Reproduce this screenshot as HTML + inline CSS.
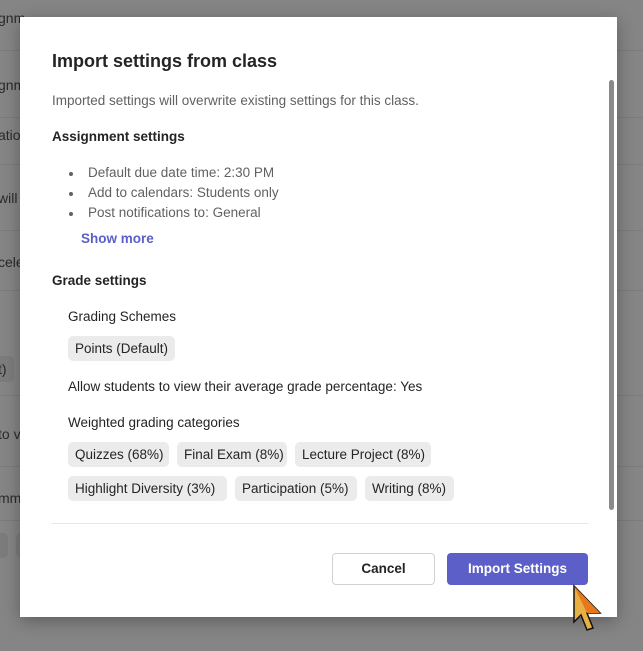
<!DOCTYPE html>
<html><head><style>
*{margin:0;padding:0;box-sizing:border-box}
body{width:643px;height:651px;overflow:hidden;background:#858585;font-family:"Liberation Sans",sans-serif;position:relative;color:#242424}
.bg{position:absolute;left:0;font-size:14px;color:#2a2a2a}
.row{position:absolute;left:0;width:643px;height:1px;background:#7b7b7b}
.dlg{position:absolute;left:20px;top:17px;width:597px;height:600px;background:#fff;box-shadow:0 4px 16px rgba(0,0,0,.3)}
.a{position:absolute;white-space:nowrap}
.chip{position:absolute;height:25px;background:#ebebeb;border-radius:5px;font-size:13.5px;line-height:25px;padding:0 7px;color:#242424;white-space:nowrap}
.li{font-size:13.5px;color:#616161}
.dot{position:absolute;width:4px;height:4px;border-radius:50%;background:#616161}
</style></head><body>
<div class="row" style="top:50px"></div><div class="row" style="top:117px"></div><div class="row" style="top:164px"></div><div class="row" style="top:230px"></div><div class="row" style="top:290px"></div><div class="row" style="top:395px"></div><div class="row" style="top:466px"></div><div class="row" style="top:520px"></div>
<div class="bg" style="top:10px;left:-2px">gnm</div>
<div class="bg" style="top:77px;left:-2px">gnm</div>
<div class="bg" style="top:127px;left:-2px">atio</div>
<div class="bg" style="top:190px;left:-2px">will</div>
<div class="bg" style="top:254px;left:-2px">cele</div>
<div style="position:absolute;left:-10px;top:356px;width:24px;height:26px;background:#7c7c7c;border-radius:5px"></div>
<div class="bg" style="top:361px;left:-2px">t)</div>
<div class="bg" style="top:426px;left:-2px">to v</div>
<div class="bg" style="top:490px;left:-2px">mme</div>
<div style="position:absolute;left:-10px;top:533px;width:18px;height:25px;background:#7c7c7c;border-radius:5px"></div>
<div style="position:absolute;left:16px;top:533px;width:10px;height:25px;background:#7c7c7c;border-radius:5px"></div>
<div class="dlg">
<div class="a" style="left:32px;top:34px;font-size:18px;font-weight:bold;color:#242424">Import settings from class</div>
<div class="a li" style="left:32px;top:76px">Imported settings will overwrite existing settings for this class.</div>
<div class="a" style="left:32px;top:112px;font-size:13.5px;font-weight:bold">Assignment settings</div>
<div class="dot" style="left:49px;top:155px"></div><div class="a li" style="left:68px;top:148px">Default due date time: 2:30 PM</div>
<div class="dot" style="left:49px;top:175px"></div><div class="a li" style="left:68px;top:168px">Add to calendars: Students only</div>
<div class="dot" style="left:49px;top:195px"></div><div class="a li" style="left:68px;top:188px">Post notifications to: General</div>
<div class="a" style="left:61px;top:214px;font-size:13.5px;font-weight:bold;color:#5b5fc7">Show more</div>
<div class="a" style="left:32px;top:256px;font-size:13.5px;font-weight:bold">Grade settings</div>
<div class="a" style="left:48px;top:292px;font-size:13.5px">Grading Schemes</div>
<div class="chip" style="left:48px;top:319px">Points (Default)</div>
<div class="a" style="left:48px;top:362px;font-size:13.5px">Allow students to view their average grade percentage: Yes</div>
<div class="a" style="left:48px;top:398px;font-size:13.5px">Weighted grading categories</div>
<div class="chip" style="left:48px;top:425px;width:101px">Quizzes (68%)</div>
<div class="chip" style="left:157px;top:425px;width:110px">Final Exam (8%)</div>
<div class="chip" style="left:275px;top:425px;width:136px">Lecture Project (8%)</div>
<div class="chip" style="left:48px;top:459px;width:159px">Highlight Diversity (3%)</div>
<div class="chip" style="left:215px;top:459px;width:122px">Participation (5%)</div>
<div class="chip" style="left:345px;top:459px;width:89px">Writing (8%)</div>
<div style="position:absolute;left:589px;top:63px;width:5px;height:430px;border-radius:3px;background:#8a8a8a"></div>
<div style="position:absolute;left:32px;top:506px;width:536px;height:1px;background:#e6e6e6"></div>
<div style="position:absolute;left:312px;top:536px;width:103px;height:32px;border:1px solid #d1d1d1;border-radius:4px;font-size:13.5px;font-weight:bold;line-height:30px;text-align:center">Cancel</div>
<div style="position:absolute;left:427px;top:536px;width:141px;height:32px;background:#5b5fc7;border-radius:4px;font-size:13.5px;font-weight:bold;line-height:32px;text-align:center;color:#fff">Import Settings</div>
</div>
<svg style="position:absolute;left:572px;top:584px" width="34" height="50" viewBox="0 0 34 50">
<path d="M2 2 L2 38 L9 31 L15 46 L21 44 L15 29 L28 29 Z" fill="#e8b040" stroke="#111" stroke-width="1.5"/>
<path d="M2 2 L28 29 L15 29 Z" fill="#e9781c"/>
</svg>
</body></html>
